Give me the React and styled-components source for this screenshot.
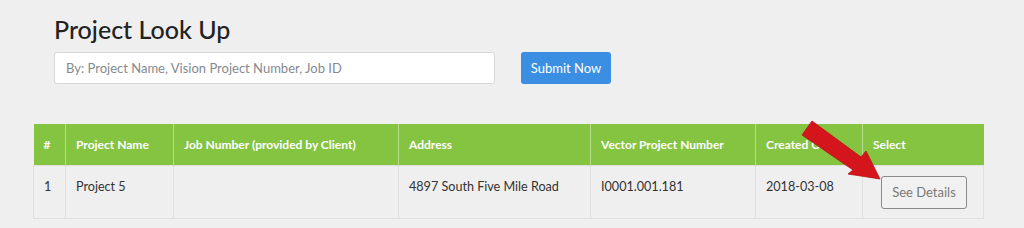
import React from "react";
import styled, { createGlobalStyle } from "styled-components";

const GlobalStyle = createGlobalStyle`
  html, body {
    margin: 0;
    padding: 0;
    background: #efefef;
    font-family: "Lato", "Open Sans", sans-serif;
  }
`;

const Page = styled.div`
  position: relative;
  width: 1024px;
  height: 228px;
  overflow: hidden;
  background: #efefef;
`;

const Search = styled.div`
  padding: 14px 0 0 54px;
`;

const Title = styled.h1`
  margin: 0 0 8px;
  font-size: 25px;
  font-weight: 500;
  color: #222;
  line-height: 30px;
`;

const SearchRow = styled.div`
  display: flex;
  align-items: center;
  gap: 26px;
`;

const Input = styled.input`
  box-sizing: border-box;
  width: 441px;
  height: 32px;
  border: 1px solid #d8d8d8;
  border-radius: 3px;
  background: #fff;
  padding: 0 11px;
  font-family: inherit;
  font-size: 13px;
  color: #333;
  &::placeholder {
    color: #858a8f;
  }
`;

const SubmitButton = styled.button`
  box-sizing: border-box;
  height: 32px;
  width: 90px;
  border: none;
  border-radius: 3px;
  background: #3a8fe2;
  color: #fff;
  font-family: inherit;
  font-size: 13px;
  cursor: pointer;
`;

const Table = styled.table`
  margin: 40px 0 0 33px;
  width: 950px;
  border-collapse: collapse;
  table-layout: fixed;
`;

const Th = styled.th`
  width: ${(p) => p.w}px;
  height: 41px;
  box-sizing: border-box;
  background: #85c441;
  color: #fff;
  font-size: 12px;
  font-weight: 700;
  text-align: left;
  padding: 0 10px;
  border-left: 1px solid #b5dc8c;
  &:first-child {
    border-left: none;
  }
`;

const Td = styled.td`
  height: 53px;
  box-sizing: border-box;
  vertical-align: top;
  padding: 13px 10px 0;
  font-size: 12.6px;
  color: #333;
  border: 1px solid #e0e0e0;
  background: #efefef;
`;

const DetailsButton = styled.button`
  margin: -3px 0 0 8px;
  box-sizing: border-box;
  width: 86px;
  height: 33px;
  border: 1px solid #8a8a8a;
  border-radius: 3px;
  background: #f1f1f1;
  color: #7a7a7a;
  font-family: inherit;
  font-size: 13px;
  cursor: pointer;
`;

const Arrow = styled.svg`
  position: absolute;
  left: 0;
  top: 0;
  pointer-events: none;
`;

const columns = [
  ["#", 32],
  ["Project Name", 108],
  ["Job Number (provided by Client)", 225],
  ["Address", 192],
  ["Vector Project Number", 165],
  ["Created On", 107],
  ["Select", 121],
];

export default function App() {
  return (
    <Page>
      <GlobalStyle />
      <Search>
        <Title>Project Look Up</Title>
        <SearchRow>
          <Input placeholder="By: Project Name, Vision Project Number, Job ID" />
          <SubmitButton>Submit Now</SubmitButton>
        </SearchRow>
      </Search>
      <Table>
        <thead>
          <tr>
            {columns.map(([label, w]) => (
              <Th key={label} w={w}>
                {label}
              </Th>
            ))}
          </tr>
        </thead>
        <tbody>
          <tr>
            <Td>1</Td>
            <Td>Project 5</Td>
            <Td></Td>
            <Td>4897 South Five Mile Road</Td>
            <Td>I0001.001.181</Td>
            <Td>2018-03-08</Td>
            <Td>
              <DetailsButton>See Details</DetailsButton>
            </Td>
          </tr>
        </tbody>
      </Table>
      <Arrow width="1024" height="228" viewBox="0 0 1024 228">
        <polygon
          points="812,121 802,135 853,170 848,174 880,179 866,151 861,157"
          fill="#d4151c"
          stroke="#b81016"
          strokeWidth="0.8"
          strokeLinejoin="round"
        />
      </Arrow>
    </Page>
  );
}
